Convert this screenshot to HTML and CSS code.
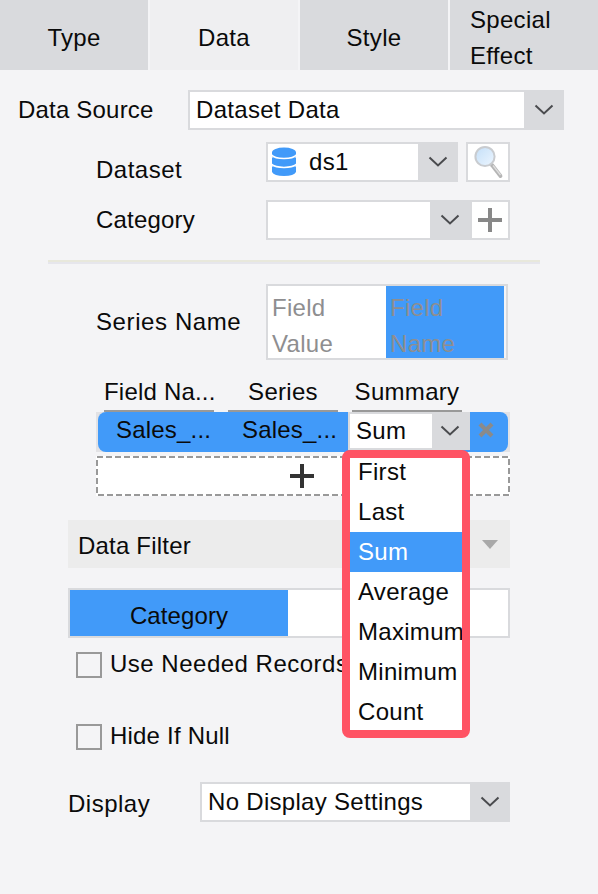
FILE: index.html
```
<!DOCTYPE html>
<html lang="en">
<head>
    <meta charset="UTF-8">
    <meta name="viewport" content="width=device-width, initial-scale=1.0">
    <title>Chart Data Settings</title>
    <link rel="stylesheet" href="styles.css">
</head>
<body>

<!-- Shared icons -->
<svg class="sprite" width="0" height="0">
    <symbol id="chevron" viewBox="0 0 20 12">
        <path d="M1.5 1.5 L10 9.5 L18.5 1.5" fill="none" stroke="#4a4b4e" stroke-width="2"/>
    </symbol>
    <symbol id="plus" viewBox="0 0 24 24">
        <path d="M12 0 V24 M0 12 H24" fill="none" stroke="currentColor" stroke-width="4"/>
    </symbol>
</svg>

<div class="tabs">
    <div class="tab">Type</div>
    <div class="tab active">Data</div>
    <div class="tab">Style</div>
    <div class="tab tab-wrap">Special Effect</div>
</div>

<div class="panel">
    <div class="row row-source">
        <label class="label">Data Source</label>
        <div class="select">
            <span class="value">Dataset Data</span>
            <span class="arrow"><svg><use href="#chevron"/></svg></span>
        </div>
    </div>

    <div class="row row-dataset">
        <label class="label">Dataset</label>
        <div class="select">
            <svg class="db-icon" viewBox="0 0 26 30">
                <path d="M1 5 V25 Q3 29 13 29 Q23 29 25 25 V5 Z" fill="#419af9"/>
                <ellipse cx="13" cy="5.5" rx="12" ry="5" fill="#419af9"/>
                <path d="M0 7.5 Q3 11.5 13 11.5 Q23 11.5 26 7.5 M0 17 Q4 20.5 13 20.5 Q22 20.5 26 17" fill="none" stroke="#fff" stroke-width="1.7"/>
                <path d="M0 9 V12 L2 10 Z M26 9 V12 L24 10 Z M0 18 V21 L2 19 Z M26 18 V21 L24 19 Z" fill="#fff"/>
            </svg>
            <span class="value">ds1</span>
            <span class="arrow"><svg><use href="#chevron"/></svg></span>
        </div>
        <div class="icon-btn search">
            <svg viewBox="0 0 40 36">
                <defs>
                    <linearGradient id="glass" x1="0" y1="0" x2="1" y2="1">
                        <stop offset="0" stop-color="#c4dff8"/>
                        <stop offset="1" stop-color="#edf6ff"/>
                    </linearGradient>
                </defs>
                <path d="M24 21 L32.5 32" stroke="#b5b5b5" stroke-width="3.8" stroke-linecap="round"/>
                <path d="M25 21.5 L32.5 31" stroke="#dedede" stroke-width="1.3"/>
                <circle cx="17" cy="12.5" r="9.6" fill="url(#glass)" stroke="#c9ccd0" stroke-width="2"/>
            </svg>
        </div>
    </div>

    <div class="row row-category">
        <label class="label">Category</label>
        <div class="select">
            <span class="value"></span>
            <span class="arrow"><svg><use href="#chevron"/></svg></span>
        </div>
        <div class="icon-btn add"><svg><use href="#plus"/></svg></div>
    </div>

    <div class="divider"></div>

    <div class="row row-series">
        <label class="label">Series Name</label>
        <div class="field-switch">
            <div class="option">Field Value</div>
            <div class="option selected">Field Name</div>
        </div>
    </div>

    <div class="fields">
        <div class="fields-head">
            <div>Field Na...</div>
            <div>Series</div>
            <div>Summary</div>
        </div>
        <div class="fields-frame">
            <div class="fields-row">
                <div class="cell">Sales_...</div>
                <div class="cell">Sales_...</div>
                <div class="summary">
                    <div class="select">
                        <span class="value">Sum</span>
                        <span class="arrow"><svg><use href="#chevron"/></svg></span>
                    </div>
                    <div class="menu">
                        <ul>
                            <li>First</li>
                            <li>Last</li>
                            <li class="current">Sum</li>
                            <li>Average</li>
                            <li>Maximum</li>
                            <li>Minimum</li>
                            <li>Count</li>
                        </ul>
                    </div>
                </div>
                <div class="remove">
                    <svg viewBox="0 0 16 16"><path d="M2 2 L14 14 M14 2 L2 14" stroke="#8a8a8a" stroke-width="4.2"/></svg>
                </div>
            </div>
        </div>
        <div class="add-row">
            <svg class="add-outline"><rect x="1" y="1" width="412" height="38"/></svg>
            <svg class="add-icon"><use href="#plus"/></svg>
        </div>
    </div>

    <div class="filter-head">
        <span>Data Filter</span>
        <span class="triangle"></span>
    </div>
    <div class="filter-tabs">
        <div class="filter-tab selected">Category</div>
        <div class="filter-tab"></div>
    </div>
    <div class="check-row records"><span class="box"></span><span>Use Needed Records</span></div>
    <div class="check-row"><span class="box"></span><span>Hide If Null</span></div>

    <div class="row row-display">
        <label class="label">Display</label>
        <div class="select">
            <span class="value">No Display Settings</span>
            <span class="arrow"><svg><use href="#chevron"/></svg></span>
        </div>
    </div>
</div>

</body>
</html>
```
FILE: styles.css
```
* {
    margin: 0;
    padding: 0;
    box-sizing: border-box;
}

body {
    width: 598px;
    height: 894px;
    overflow: hidden;
    background-color: #f4f4f6;
    font-family: 'Liberation Sans', Arial, sans-serif;
    font-size: 24px;
    line-height: 36px;
    letter-spacing: 0.3px;
    color: #0a0a0a;
}

svg {
    display: block;
}

.sprite {
    position: absolute;
}

/* Top tabs */
.tabs {
    display: grid;
    grid-template-columns: repeat(4, 148px);
    grid-template-rows: 70px;
    gap: 2px;
}

.tab {
    display: flex;
    align-items: center;
    justify-content: center;
    padding-top: 5px;
    background-color: #d9dadd;
}

.tab.active {
    background-color: #efeff1;
}

.tab-wrap {
    align-items: flex-start;
    justify-content: flex-start;
    padding: 2px 40px 0 20px;
}

/* Form rows */
.panel {
    padding-top: 20px;
}

.row {
    display: flex;
    align-items: flex-start;
    height: 40px;
}

.label {
    flex: none;
}

.select {
    display: flex;
    align-items: center;
    height: 40px;
    border: 2px solid #d9dadd;
    background-color: #fff;
}

.value {
    flex: 1;
    padding-left: 6px;
    white-space: nowrap;
}

.arrow {
    display: flex;
    align-items: center;
    justify-content: center;
    flex: none;
    width: 38px;
    height: 36px;
    padding-left: 2px;
    background-color: #d9dadd;
}

.arrow svg {
    width: 20px;
    height: 12px;
}

.row-source {
    padding-left: 18px;
}

.row-source .label {
    width: 170px;
    padding-top: 2px;
    letter-spacing: 0.2px;
}

.row-source .select {
    width: 376px;
}

.row-dataset,
.row-category,
.row-series {
    padding-left: 96px;
}

.row-dataset {
    margin-top: 12px;
}

.row-dataset .label {
    width: 170px;
    padding-top: 10px;
    letter-spacing: 0.5px;
}

.row-dataset .select {
    width: 192px;
}

.db-icon {
    width: 26px;
    height: 30px;
    margin-left: 3px;
}

.row-dataset .value {
    padding-left: 12px;
}

.icon-btn {
    height: 40px;
    border: 2px solid #d9dadd;
    background-color: #fff;
}

.search {
    width: 44px;
    margin-left: 8px;
}

.row-category {
    margin-top: 18px;
}

.row-category .label {
    width: 170px;
    padding-top: 2px;
    letter-spacing: 0.2px;
}

.row-category .select {
    width: 204px;
}

.add {
    display: flex;
    align-items: center;
    justify-content: center;
    width: 40px;
    color: #888;
}

.add svg {
    width: 24px;
    height: 24px;
}

.divider {
    width: 492px;
    height: 4px;
    margin: 20px 0 20px 48px;
    border-top: 2px solid #e8e8dc;
    background-color: #e6e6ec;
}

.row-series {
    height: 76px;
}

.row-series .label {
    width: 170px;
    padding-top: 20px;
    letter-spacing: 0.6px;
}

.field-switch {
    display: flex;
    width: 242px;
    height: 76px;
    border: 2px solid #d9dadd;
    color: #8e8e90;
}

.option {
    width: 118px;
    padding: 4px 30px 0 4px;
    background-color: #fff;
}

.option.selected {
    background-color: #419af9;
}

/* Field table */
.fields {
    width: 414px;
    margin: 14px 0 0 96px;
}

.fields-head {
    display: flex;
    gap: 14px;
    padding-left: 8px;
}

.fields-head div {
    width: 110px;
    height: 38px;
    border-bottom: 2px solid #999;
    text-align: center;
    white-space: nowrap;
}

.fields-head div:first-child {
    text-align: left;
    letter-spacing: 0.2px;
}

.fields-frame {
    height: 40px;
    background-color: #e2e2e5;
}

.fields-row {
    display: flex;
    height: 40px;
    margin: 0 2px;
    border-radius: 8px;
    background-color: #419af9;
}

.cell {
    width: 125px;
    padding-left: 18px;
    letter-spacing: 0.2px;
}

.cell + .cell {
    padding-left: 19px;
}

.summary {
    position: relative;
    width: 122px;
}

.summary .select {
    height: 38px;
}

.summary .value {
    line-height: 34px;
}

.summary .arrow {
    width: 36px;
    height: 34px;
    padding-left: 0;
}

.menu {
    position: absolute;
    top: 38px;
    left: -6px;
    z-index: 1;
    width: 128px;
    height: 288px;
    overflow: hidden;
    border: 8px solid #ff5364;
    border-radius: 8px;
    background-color: #fff;
}

.menu ul {
    margin-top: -6px;
    list-style: none;
}

.menu li {
    height: 40px;
    padding-left: 8px;
    line-height: 39px;
}

.menu .current {
    background-color: #419af9;
    color: #fff;
}

.remove {
    padding: 10px 0 0 8px;
}

.remove svg {
    width: 16px;
    height: 16px;
}

.add-row {
    position: relative;
    display: flex;
    align-items: center;
    justify-content: center;
    height: 40px;
    margin-top: 4px;
    padding-right: 2px;
    background-color: #fff;
}

.add-outline {
    position: absolute;
    top: 0;
    left: 0;
    width: 414px;
    height: 40px;
}

.add-outline rect {
    fill: none;
    stroke: #999;
    stroke-width: 2;
    stroke-dasharray: 6 3;
}

.add-icon {
    width: 24px;
    height: 24px;
    color: #333;
}

/* Filter section */
.filter-head {
    display: flex;
    align-items: center;
    justify-content: space-between;
    width: 442px;
    height: 48px;
    margin: 24px 0 0 68px;
    padding: 3px 12px 0 10px;
    background-color: #ececec;
    letter-spacing: 0.2px;
}

.triangle {
    margin-top: -2px;
    border: 8px solid transparent;
    border-top: 9px solid #a9a9a9;
    border-bottom: 0;
}

.filter-tabs {
    display: flex;
    width: 442px;
    height: 50px;
    margin: 20px 0 14px 68px;
    border: 2px solid #d9dadd;
    background-color: #fff;
}

.filter-tab.selected {
    width: 218px;
    padding-top: 8px;
    background-color: #419af9;
    letter-spacing: 0.1px;
    text-align: center;
}

.check-row {
    display: flex;
    gap: 8px;
    height: 72px;
    margin-left: 76px;
    letter-spacing: 0.2px;
    white-space: nowrap;
}

.check-row.records {
    letter-spacing: 0.5px;
}

.check-row span:last-child {
    margin-top: -6px;
}

.box {
    width: 26px;
    height: 26px;
    border: 2px solid #999;
}

.row-display {
    margin-top: -14px;
    padding-left: 68px;
}

.row-display .label {
    width: 132px;
    padding-top: 4px;
    letter-spacing: 0.5px;
}

.row-display .select {
    width: 310px;
}
```
